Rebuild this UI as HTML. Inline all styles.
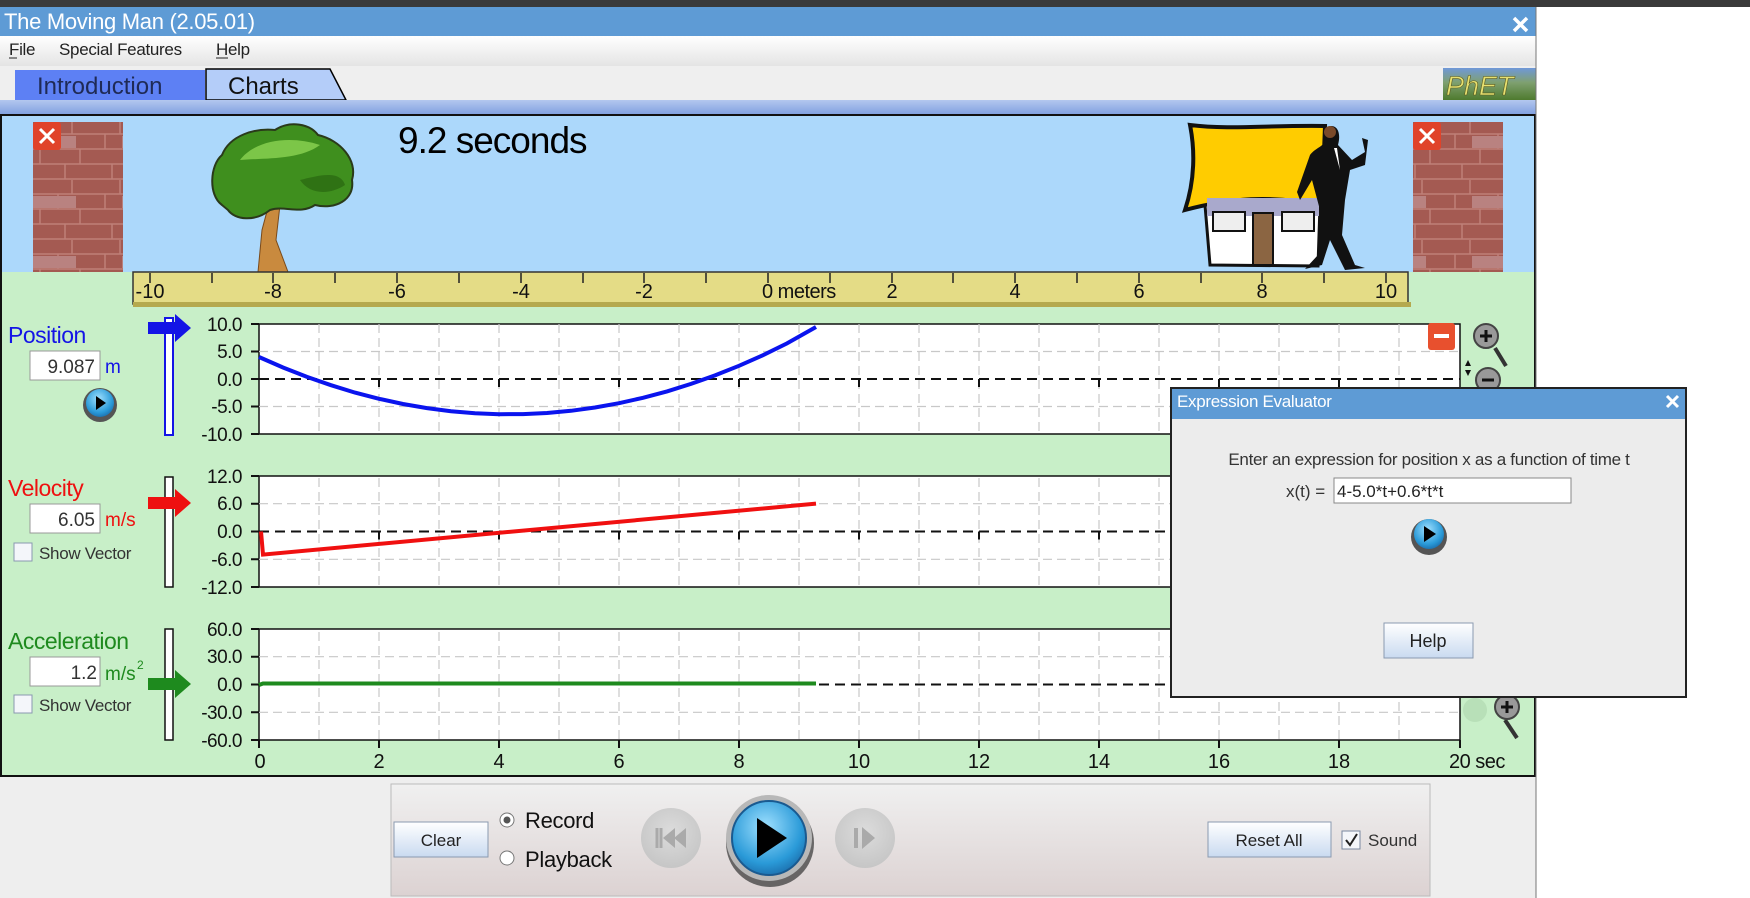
<!DOCTYPE html>
<html><head><meta charset="utf-8"><style>
html,body{margin:0;padding:0;background:#fff;width:1750px;height:898px;overflow:hidden}
svg{display:block}
text{font-family:"Liberation Sans",sans-serif}
</style></head><body>
<svg width="1750" height="898" viewBox="0 0 1750 898" xmlns="http://www.w3.org/2000/svg">
<defs>
<linearGradient id="menu" x1="0" y1="0" x2="0" y2="1"><stop offset="0" stop-color="#ffffff"/><stop offset="1" stop-color="#e4e4e4"/></linearGradient>
<linearGradient id="stripe" x1="0" y1="0" x2="0" y2="1"><stop offset="0" stop-color="#b3c7ef"/><stop offset="1" stop-color="#7f9fe0"/></linearGradient>
<linearGradient id="ctrl" x1="0" y1="0" x2="0" y2="1"><stop offset="0" stop-color="#f0f0f0"/><stop offset="1" stop-color="#dcd2d2"/></linearGradient>
<linearGradient id="btn" x1="0" y1="0" x2="0" y2="1"><stop offset="0" stop-color="#ffffff"/><stop offset="1" stop-color="#c9daf0"/></linearGradient>
<linearGradient id="phet" x1="0" y1="0" x2="0" y2="1"><stop offset="0" stop-color="#6f98d8"/><stop offset="0.45" stop-color="#7fa070"/><stop offset="1" stop-color="#4e7a2e"/></linearGradient>
<radialGradient id="blueb" cx="0.45" cy="0.35" r="0.7"><stop offset="0" stop-color="#9fe0ff"/><stop offset="0.7" stop-color="#2a9ad8"/><stop offset="1" stop-color="#1a6aa8"/></radialGradient>
<radialGradient id="greyb" cx="0.5" cy="0.4" r="0.6"><stop offset="0" stop-color="#dcdcdc"/><stop offset="1" stop-color="#c6c6c6"/></radialGradient>
<pattern id="brick" width="90" height="60" patternUnits="userSpaceOnUse">
<rect width="90" height="60" fill="#a45a52"/>
<g stroke="#bf7f78" stroke-width="1.5">
<line x1="0" y1="14" x2="90" y2="14"/><line x1="0" y1="29" x2="90" y2="29"/><line x1="0" y1="44" x2="90" y2="44"/><line x1="0" y1="59" x2="90" y2="59"/>
<line x1="30" y1="0" x2="30" y2="14"/><line x1="72" y1="0" x2="72" y2="14"/>
<line x1="15" y1="14" x2="15" y2="29"/><line x1="58" y1="14" x2="58" y2="29"/>
<line x1="40" y1="29" x2="40" y2="44"/><line x1="80" y1="29" x2="80" y2="44"/>
<line x1="22" y1="44" x2="22" y2="59"/><line x1="65" y1="44" x2="65" y2="59"/>
</g>
<rect x="32" y="16" width="44" height="12" fill="#b98280"/>
</pattern>
</defs>

<rect x="0" y="0" width="1750" height="7" fill="#3a3a3a"/>
<rect x="0" y="7" width="1536" height="29" fill="#5e9bd5"/>
<text x="4" y="29" font-size="22" fill="#fff" letter-spacing="-0.3">The Moving Man (2.05.01)</text>
<path d="M1514 18 L1527 31 M1527 18 L1514 31" stroke="#fff" stroke-width="3.5"/>
<rect x="0" y="36" width="1536" height="30" fill="url(#menu)"/>
<g font-size="17" fill="#222" letter-spacing="-0.3">
<text x="9" y="55">File</text><text x="59" y="55">Special Features</text><text x="216" y="55">Help</text>
</g>
<line x1="9" y1="58" x2="17" y2="58" stroke="#222"/><line x1="216" y1="58" x2="228" y2="58" stroke="#222"/>
<rect x="0" y="66" width="1536" height="34" fill="#efefef"/>
<rect x="15" y="70" width="190" height="30" fill="#5d80f4"/>
<text x="37" y="94" font-size="24" fill="#1f2a55">Introduction</text>
<path d="M206 100 L206 69 L330 69 L346 100 Z" fill="#b4cdf9" stroke="#000" stroke-width="1.5"/>
<text x="228" y="94" font-size="24" fill="#111">Charts</text>
<rect x="1443" y="68" width="93" height="32" fill="url(#phet)"/>
<text x="1446" y="95" font-size="27" font-style="italic" font-family="Liberation Serif,serif" fill="#e6e070" stroke="#5a5a20" stroke-width="0.6">PhET</text>
<rect x="0" y="100" width="1536" height="15" fill="url(#stripe)"/>
<line x1="0" y1="115" x2="1536" y2="115" stroke="#111" stroke-width="2"/>

<rect x="2" y="116" width="1532" height="156" fill="#acd8fb"/>
<rect x="33" y="122" width="90" height="150" fill="url(#brick)"/>
<rect x="1413" y="122" width="90" height="150" fill="url(#brick)"/>
<rect x="33" y="122" width="28" height="28" rx="3" fill="#e0432a"/>
<path d="M40 129 L54 143 M54 129 L40 143" stroke="#fff" stroke-width="3"/>
<rect x="1413" y="122" width="28" height="28" rx="3" fill="#e0432a"/>
<path d="M1420 129 L1434 143 M1434 129 L1420 143" stroke="#fff" stroke-width="3"/>
<path d="M258 272 L262 230 L270 200 L285 180 L295 186 L280 205 L276 240 L288 272 Z" fill="#c98a3e" stroke="#7a4a1a"/>
<path d="M222 205 C208 195 210 165 222 155 C230 135 255 128 275 130 C290 120 310 124 318 135 C340 140 358 160 352 180 C355 200 335 210 315 205 C300 215 285 205 270 210 C255 222 235 220 228 210 Z" fill="#3f8f1e" stroke="#2a3a1a" stroke-width="2"/>
<path d="M240 160 C255 140 290 135 320 145 C300 160 265 158 240 160 Z" fill="#7cc648"/>
<path d="M300 180 C320 175 340 170 345 185 C330 195 310 195 300 180 Z" fill="#2f7214"/>
<text x="398" y="153" font-size="37" fill="#000" letter-spacing="-1">9.2 seconds</text>
<path d="M1190 125 C1230 130 1270 125 1325 126 L1322 205 C1270 195 1230 198 1185 210 C1195 180 1195 150 1190 125 Z" fill="#ffcc00" stroke="#111" stroke-width="4"/>
<path d="M1205 205 L1320 205 L1318 266 L1210 265 Z" fill="#fff" stroke="#111" stroke-width="3"/>
<rect x="1207" y="198" width="112" height="18" fill="#a9a9cc"/>
<rect x="1253" y="213" width="20" height="52" fill="#8b6542" stroke="#111" stroke-width="2"/>
<rect x="1213" y="212" width="32" height="19" fill="#eee" stroke="#111" stroke-width="2"/>
<rect x="1282" y="212" width="32" height="19" fill="#eee" stroke="#111" stroke-width="2"/>
<path d="M1325 128 C1335 122 1342 130 1338 145 L1352 160 L1365 152 L1362 138 L1368 140 L1365 165 L1350 170 L1345 200 L1342 235 L1355 265 L1365 268 L1345 270 L1330 240 L1322 265 L1305 269 L1318 255 L1320 210 L1312 180 L1300 200 L1297 192 L1310 155 C1315 148 1325 146 1325 140 Z" fill="#111"/>
<path d="M1334 148 L1340 170 L1337 148 Z" fill="#fff"/>
<circle cx="1330" cy="132" r="6" fill="#7a4a2a"/>

<rect x="2" y="272" width="1532" height="504" fill="#c8efc8"/>
<line x1="1" y1="115" x2="1" y2="776" stroke="#111" stroke-width="2"/>
<line x1="1535" y1="115" x2="1535" y2="776" stroke="#111" stroke-width="2"/>
<line x1="0" y1="776" x2="1536" y2="776" stroke="#111" stroke-width="2"/>
<rect x="133" y="272" width="1275" height="32" fill="#e4dc86" stroke="#333" stroke-width="1.5"/>
<rect x="133" y="302" width="1278" height="5" fill="#b5a94e"/>
<g stroke="#222" stroke-width="1.5">
<line x1="150" y1="273" x2="150" y2="283"/><line x1="212" y1="273" x2="212" y2="283"/><line x1="273" y1="273" x2="273" y2="283"/><line x1="335" y1="273" x2="335" y2="283"/><line x1="397" y1="273" x2="397" y2="283"/><line x1="459" y1="273" x2="459" y2="283"/><line x1="521" y1="273" x2="521" y2="283"/><line x1="583" y1="273" x2="583" y2="283"/><line x1="644" y1="273" x2="644" y2="283"/><line x1="706" y1="273" x2="706" y2="283"/><line x1="768" y1="273" x2="768" y2="283"/><line x1="830" y1="273" x2="830" y2="283"/><line x1="892" y1="273" x2="892" y2="283"/><line x1="953" y1="273" x2="953" y2="283"/><line x1="1015" y1="273" x2="1015" y2="283"/><line x1="1077" y1="273" x2="1077" y2="283"/><line x1="1139" y1="273" x2="1139" y2="283"/><line x1="1201" y1="273" x2="1201" y2="283"/><line x1="1262" y1="273" x2="1262" y2="283"/><line x1="1324" y1="273" x2="1324" y2="283"/><line x1="1386" y1="273" x2="1386" y2="283"/>
</g>
<g font-size="20" fill="#111" text-anchor="middle">
<text x="150" y="298">-10</text><text x="273" y="298">-8</text><text x="397" y="298">-6</text><text x="521" y="298">-4</text><text x="644" y="298">-2</text><text x="892" y="298">2</text><text x="1015" y="298">4</text><text x="1139" y="298">6</text><text x="1262" y="298">8</text><text x="1386" y="298">10</text>
</g>
<text x="762" y="298" font-size="20" fill="#111" letter-spacing="-0.5">0 meters</text>

<g fill="#fff" stroke="#111" stroke-width="1.5">
<rect x="259" y="324" width="1201" height="110"/>
<rect x="259" y="476" width="1201" height="111"/>
<rect x="259" y="629" width="1201" height="111"/>
</g>
<g stroke="#c8c8c8" stroke-width="1.2" stroke-dasharray="9,5">
<path d="M319 324V740M379 324V740M439 324V740M499 324V740M559 324V740M619 324V740M679 324V740M739 324V740M799 324V740M859 324V740M919 324V740M979 324V740M1039 324V740M1099 324V740M1159 324V740M1219 324V740M1279 324V740M1339 324V740M1399 324V740"/>
<path d="M259 351.5H1460M259 406.5H1460M259 503.7H1460M259 559.3H1460M259 656.7H1460M259 712.3H1460"/>
</g>
<g fill="#c8efc8"><rect x="260" y="435" width="1200" height="40"/><rect x="260" y="588" width="1200" height="40"/></g>
<g stroke="#111" stroke-width="2" stroke-dasharray="10,6">
<path d="M259 379H1460M259 531.5H1460M259 684.5H1460"/>
</g>
<g stroke="#111" stroke-width="2">
<path d="M379 379v8M499 379v8M619 379v8M739 379v8M859 379v8M979 379v8M1099 379v8M1219 379v8M1339 379v8"/>
<path d="M379 531.5v8M499 531.5v8M619 531.5v8M739 531.5v8M859 531.5v8M979 531.5v8M1099 531.5v8M1219 531.5v8M1339 531.5v8"/>
<path d="M259 740v8M379 740v8M499 740v8M619 740v8M739 740v8M859 740v8M979 740v8M1099 740v8M1219 740v8M1339 740v8M1460 740v8"/>
<path d="M251 324h8M251 351.5h8M251 379h8M251 406.5h8M251 434h8M251 476h8M251 503.7h8M251 531.5h8M251 559.3h8M251 587h8M251 629h8M251 656.7h8M251 684.5h8M251 712.3h8M251 740h8"/>
</g>
<g font-size="19" fill="#111" text-anchor="end" letter-spacing="-0.5">
<text x="242" y="331">10.0</text><text x="242" y="358">5.0</text><text x="242" y="386">0.0</text><text x="242" y="413">-5.0</text><text x="242" y="441">-10.0</text>
<text x="242" y="483">12.0</text><text x="242" y="510">6.0</text><text x="242" y="538">0.0</text><text x="242" y="566">-6.0</text><text x="242" y="594">-12.0</text>
<text x="242" y="636">60.0</text><text x="242" y="663">30.0</text><text x="242" y="691">0.0</text><text x="242" y="719">-30.0</text><text x="242" y="747">-60.0</text>
</g>
<g font-size="20" fill="#111" text-anchor="middle">
<text x="260" y="768">0</text><text x="379" y="768">2</text><text x="499" y="768">4</text><text x="619" y="768">6</text><text x="739" y="768">8</text><text x="859" y="768">10</text><text x="979" y="768">12</text><text x="1099" y="768">14</text><text x="1219" y="768">16</text><text x="1339" y="768">18</text>
</g>
<text x="1449" y="768" font-size="20" fill="#111" letter-spacing="-0.5">20 sec</text>
<polyline fill="none" stroke="#0a14ee" stroke-width="4" points="259,357 283,367.5 307,376.9 331,385.2 355,392.6 379,398.8 403,404 427,408.1 451,411.2 475,413.2 499,414.2 523,414.1 547,413 571,410.8 595,407.5 619,403.2 643,397.8 667,391.4 691,383.9 715,375.4 739,365.8 763,355.2 787,343.4 816,327"/>
<polyline fill="none" stroke="#f01010" stroke-width="4" points="261,531.5 263,554.6 816,503.6"/>
<polyline fill="none" stroke="#1e8a1e" stroke-width="4" points="259,685 263,683.5 816,683.5"/>
<rect x="1428" y="323" width="27" height="27" rx="3" fill="#e8502e"/>
<rect x="1434" y="334" width="15" height="4" fill="#fff"/>
<g>
<line x1="1495" y1="348" x2="1506" y2="366" stroke="#333" stroke-width="4"/>
<circle cx="1486" cy="336" r="12" fill="#999" stroke="#444" stroke-width="2"/>
<path d="M1480 336h12M1486 330v12" stroke="#111" stroke-width="3"/>
<circle cx="1488" cy="380" r="12" fill="#999" stroke="#444" stroke-width="2"/>
<path d="M1482 380h12" stroke="#111" stroke-width="3"/>
<path d="M1468 360 l-3 6 h6 Z M1468 376 l-3 -6 h6 Z" fill="#111"/>
<circle cx="1475" cy="710" r="12" fill="#b8e0b8"/>
<line x1="1505" y1="720" x2="1517" y2="738" stroke="#333" stroke-width="4"/>
<circle cx="1507" cy="707" r="12" fill="#999" stroke="#444" stroke-width="2"/>
<path d="M1501 707h12M1507 701v12" stroke="#111" stroke-width="3"/>
</g>

<text x="8" y="343" font-size="23" fill="#1414e6" letter-spacing="-0.5">Position</text>
<rect x="30" y="351" width="70" height="29" fill="#fff" stroke="#999"/>
<text x="95" y="373" font-size="19" fill="#333" text-anchor="end">9.087</text>
<text x="105" y="373" font-size="19" fill="#1414e6">m</text>
<circle cx="100" cy="405" r="17" fill="#555"/><circle cx="100" cy="403" r="14" fill="url(#blueb)"/>
<path d="M96 396 L106 403 L96 410 Z" fill="#000"/>
<rect x="165" y="318" width="8" height="117" fill="#fff" stroke="#1414e6" stroke-width="2"/>
<path d="M148 322 H175 V314 L191 328 L175 342 V334 H148 Z" fill="#1414e6"/>

<text x="8" y="496" font-size="23" fill="#ee1010" letter-spacing="-0.5">Velocity</text>
<rect x="30" y="504" width="70" height="29" fill="#fff" stroke="#999"/>
<text x="95" y="526" font-size="19" fill="#333" text-anchor="end">6.05</text>
<text x="105" y="526" font-size="19" fill="#ee1010">m/s</text>
<rect x="14" y="543" width="18" height="18" fill="#f4f6fa" stroke="#8a98b0"/>
<text x="39" y="559" font-size="17" fill="#333" letter-spacing="-0.3">Show Vector</text>
<rect x="165" y="477" width="8" height="110" fill="#fff" stroke="#111" stroke-width="1.5"/>
<path d="M148 497 H175 V489 L191 503 L175 517 V509 H148 Z" fill="#ee1010"/>

<text x="8" y="649" font-size="23" fill="#1e8a1e" letter-spacing="-0.5">Acceleration</text>
<rect x="30" y="657" width="70" height="29" fill="#fff" stroke="#999"/>
<text x="97" y="679" font-size="19" fill="#333" text-anchor="end">1.2</text>
<text x="105" y="680" font-size="19" fill="#1e8a1e">m/s</text><text x="137" y="669" font-size="12" fill="#1e8a1e">2</text>
<rect x="14" y="695" width="18" height="18" fill="#f4f6fa" stroke="#8a98b0"/>
<text x="39" y="711" font-size="17" fill="#333" letter-spacing="-0.3">Show Vector</text>
<rect x="165" y="629" width="8" height="111" fill="#fff" stroke="#111" stroke-width="1.5"/>
<path d="M148 678 H175 V670 L191 684 L175 698 V690 H148 Z" fill="#1e8a1e"/>

<rect x="0" y="777" width="1536" height="121" fill="#eeeeee"/>
<line x1="1536" y1="7" x2="1536" y2="898" stroke="#777" stroke-width="1"/>
<rect x="391" y="784" width="1039" height="112" fill="url(#ctrl)" stroke="#bbb"/>
<rect x="394" y="822" width="94" height="35" fill="url(#btn)" stroke="#8a9ab0"/>
<text x="441" y="846" font-size="17" fill="#222" text-anchor="middle">Clear</text>
<circle cx="507" cy="820" r="7" fill="#fff" stroke="#777"/><circle cx="507" cy="820" r="3.5" fill="#555"/>
<text x="525" y="828" font-size="22" fill="#111" letter-spacing="-0.3">Record</text>
<circle cx="507" cy="858" r="7" fill="#fff" stroke="#777"/>
<text x="525" y="867" font-size="22" fill="#111" letter-spacing="-0.3">Playback</text>
<circle cx="671" cy="838" r="30" fill="url(#greyb)"/>
<path d="M657 828v20M661 828v20" stroke="#aaa" stroke-width="3"/><path d="M675 828 L663 838 L675 848 Z M686 828 L674 838 L686 848 Z" fill="#aaa"/>
<circle cx="770" cy="843" r="44" fill="#333" opacity="0.7"/>
<circle cx="769" cy="838" r="43" fill="#b8b8b8"/>
<circle cx="769" cy="838" r="37" fill="url(#blueb)" stroke="#1a5a90" stroke-width="2"/>
<path d="M757 818 L787 838 L757 858 Z" fill="#000"/>
<circle cx="865" cy="838" r="30" fill="url(#greyb)"/>
<path d="M856 828v20" stroke="#aaa" stroke-width="4"/><path d="M862 827 L875 838 L862 849 Z" fill="#aaa"/>
<rect x="1208" y="822" width="123" height="35" fill="url(#btn)" stroke="#8a9ab0"/>
<text x="1269" y="846" font-size="17" fill="#222" text-anchor="middle">Reset All</text>
<rect x="1342" y="831" width="18" height="18" fill="#f4f6fa" stroke="#7a88a0"/>
<path d="M1346 840 l4 5 l7 -11" fill="none" stroke="#222" stroke-width="2"/>
<text x="1368" y="846" font-size="17" fill="#333">Sound</text>

<rect x="1171" y="388" width="515" height="309" fill="#ececec" stroke="#222" stroke-width="2"/>
<rect x="1172" y="389" width="513" height="30" fill="#5e9bd5"/>
<text x="1177" y="407" font-size="17" fill="#fff" letter-spacing="-0.3">Expression Evaluator</text>
<path d="M1667 396 L1678 407 M1678 396 L1667 407" stroke="#fff" stroke-width="3"/>
<text x="1429" y="465" font-size="17" fill="#333" text-anchor="middle" letter-spacing="-0.3">Enter an expression for position x as a function of time t</text>
<text x="1286" y="497" font-size="17" fill="#333">x(t) =</text>
<rect x="1334" y="478" width="237" height="25" fill="#fff" stroke="#888"/>
<text x="1337" y="497" font-size="17" fill="#222">4-5.0*t+0.6*t*t</text>
<circle cx="1429" cy="537" r="18" fill="#555"/><circle cx="1429" cy="534" r="15" fill="url(#blueb)"/>
<path d="M1424 526 L1436 534 L1424 542 Z" fill="#000"/>
<rect x="1384" y="623" width="89" height="35" fill="url(#btn)" stroke="#8a9ab0"/>
<text x="1428" y="647" font-size="18" fill="#222" text-anchor="middle">Help</text>
</svg>
</body></html>
